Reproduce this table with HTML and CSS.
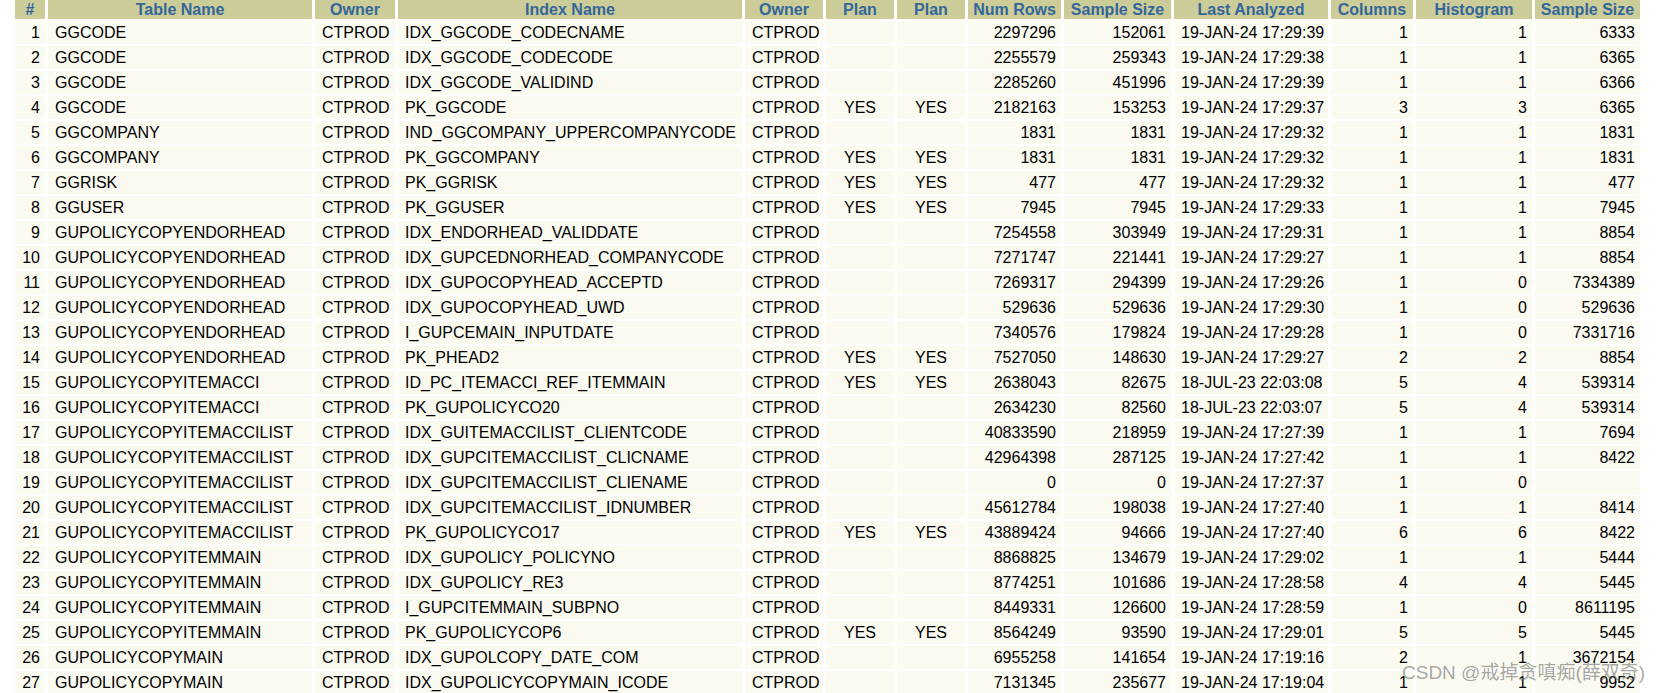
FILE: index.html
```html
<!DOCTYPE html>
<html>
<head>
<meta charset="utf-8">
<title>Index Stats</title>
<link rel="stylesheet" href="styles.css">
</head>
<body>
<table class="report">
<colgroup>
<col class="w-num"><col class="w-tab"><col class="w-own"><col class="w-idx"><col class="w-own2"><col class="w-plan"><col class="w-plan"><col class="w-rows"><col class="w-ss"><col class="w-la"><col class="w-col"><col class="w-hist"><col class="w-ss2">
</colgroup>
<thead>
<tr><th>#</th><th>Table Name</th><th>Owner</th><th>Index Name</th><th>Owner</th><th>Plan</th><th>Plan</th><th>Num Rows</th><th>Sample Size</th><th>Last Analyzed</th><th>Columns</th><th>Histogram</th><th>Sample Size</th></tr>
</thead>
<tbody>
<tr><td class="r">1</td><td>GGCODE</td><td>CTPROD</td><td>IDX_GGCODE_CODECNAME</td><td>CTPROD</td><td class="c"></td><td class="c"></td><td class="r">2297296</td><td class="r">152061</td><td>19-JAN-24 17:29:39</td><td class="r">1</td><td class="r">1</td><td class="r">6333</td></tr>
<tr><td class="r">2</td><td>GGCODE</td><td>CTPROD</td><td>IDX_GGCODE_CODECODE</td><td>CTPROD</td><td class="c"></td><td class="c"></td><td class="r">2255579</td><td class="r">259343</td><td>19-JAN-24 17:29:38</td><td class="r">1</td><td class="r">1</td><td class="r">6365</td></tr>
<tr><td class="r">3</td><td>GGCODE</td><td>CTPROD</td><td>IDX_GGCODE_VALIDIND</td><td>CTPROD</td><td class="c"></td><td class="c"></td><td class="r">2285260</td><td class="r">451996</td><td>19-JAN-24 17:29:39</td><td class="r">1</td><td class="r">1</td><td class="r">6366</td></tr>
<tr><td class="r">4</td><td>GGCODE</td><td>CTPROD</td><td>PK_GGCODE</td><td>CTPROD</td><td class="c">YES</td><td class="c">YES</td><td class="r">2182163</td><td class="r">153253</td><td>19-JAN-24 17:29:37</td><td class="r">3</td><td class="r">3</td><td class="r">6365</td></tr>
<tr><td class="r">5</td><td>GGCOMPANY</td><td>CTPROD</td><td>IND_GGCOMPANY_UPPERCOMPANYCODE</td><td>CTPROD</td><td class="c"></td><td class="c"></td><td class="r">1831</td><td class="r">1831</td><td>19-JAN-24 17:29:32</td><td class="r">1</td><td class="r">1</td><td class="r">1831</td></tr>
<tr><td class="r">6</td><td>GGCOMPANY</td><td>CTPROD</td><td>PK_GGCOMPANY</td><td>CTPROD</td><td class="c">YES</td><td class="c">YES</td><td class="r">1831</td><td class="r">1831</td><td>19-JAN-24 17:29:32</td><td class="r">1</td><td class="r">1</td><td class="r">1831</td></tr>
<tr><td class="r">7</td><td>GGRISK</td><td>CTPROD</td><td>PK_GGRISK</td><td>CTPROD</td><td class="c">YES</td><td class="c">YES</td><td class="r">477</td><td class="r">477</td><td>19-JAN-24 17:29:32</td><td class="r">1</td><td class="r">1</td><td class="r">477</td></tr>
<tr><td class="r">8</td><td>GGUSER</td><td>CTPROD</td><td>PK_GGUSER</td><td>CTPROD</td><td class="c">YES</td><td class="c">YES</td><td class="r">7945</td><td class="r">7945</td><td>19-JAN-24 17:29:33</td><td class="r">1</td><td class="r">1</td><td class="r">7945</td></tr>
<tr><td class="r">9</td><td>GUPOLICYCOPYENDORHEAD</td><td>CTPROD</td><td>IDX_ENDORHEAD_VALIDDATE</td><td>CTPROD</td><td class="c"></td><td class="c"></td><td class="r">7254558</td><td class="r">303949</td><td>19-JAN-24 17:29:31</td><td class="r">1</td><td class="r">1</td><td class="r">8854</td></tr>
<tr><td class="r">10</td><td>GUPOLICYCOPYENDORHEAD</td><td>CTPROD</td><td>IDX_GUPCEDNORHEAD_COMPANYCODE</td><td>CTPROD</td><td class="c"></td><td class="c"></td><td class="r">7271747</td><td class="r">221441</td><td>19-JAN-24 17:29:27</td><td class="r">1</td><td class="r">1</td><td class="r">8854</td></tr>
<tr><td class="r">11</td><td>GUPOLICYCOPYENDORHEAD</td><td>CTPROD</td><td>IDX_GUPOCOPYHEAD_ACCEPTD</td><td>CTPROD</td><td class="c"></td><td class="c"></td><td class="r">7269317</td><td class="r">294399</td><td>19-JAN-24 17:29:26</td><td class="r">1</td><td class="r">0</td><td class="r">7334389</td></tr>
<tr><td class="r">12</td><td>GUPOLICYCOPYENDORHEAD</td><td>CTPROD</td><td>IDX_GUPOCOPYHEAD_UWD</td><td>CTPROD</td><td class="c"></td><td class="c"></td><td class="r">529636</td><td class="r">529636</td><td>19-JAN-24 17:29:30</td><td class="r">1</td><td class="r">0</td><td class="r">529636</td></tr>
<tr><td class="r">13</td><td>GUPOLICYCOPYENDORHEAD</td><td>CTPROD</td><td>I_GUPCEMAIN_INPUTDATE</td><td>CTPROD</td><td class="c"></td><td class="c"></td><td class="r">7340576</td><td class="r">179824</td><td>19-JAN-24 17:29:28</td><td class="r">1</td><td class="r">0</td><td class="r">7331716</td></tr>
<tr><td class="r">14</td><td>GUPOLICYCOPYENDORHEAD</td><td>CTPROD</td><td>PK_PHEAD2</td><td>CTPROD</td><td class="c">YES</td><td class="c">YES</td><td class="r">7527050</td><td class="r">148630</td><td>19-JAN-24 17:29:27</td><td class="r">2</td><td class="r">2</td><td class="r">8854</td></tr>
<tr><td class="r">15</td><td>GUPOLICYCOPYITEMACCI</td><td>CTPROD</td><td>ID_PC_ITEMACCI_REF_ITEMMAIN</td><td>CTPROD</td><td class="c">YES</td><td class="c">YES</td><td class="r">2638043</td><td class="r">82675</td><td>18-JUL-23 22:03:08</td><td class="r">5</td><td class="r">4</td><td class="r">539314</td></tr>
<tr><td class="r">16</td><td>GUPOLICYCOPYITEMACCI</td><td>CTPROD</td><td>PK_GUPOLICYCO20</td><td>CTPROD</td><td class="c"></td><td class="c"></td><td class="r">2634230</td><td class="r">82560</td><td>18-JUL-23 22:03:07</td><td class="r">5</td><td class="r">4</td><td class="r">539314</td></tr>
<tr><td class="r">17</td><td>GUPOLICYCOPYITEMACCILIST</td><td>CTPROD</td><td>IDX_GUITEMACCILIST_CLIENTCODE</td><td>CTPROD</td><td class="c"></td><td class="c"></td><td class="r">40833590</td><td class="r">218959</td><td>19-JAN-24 17:27:39</td><td class="r">1</td><td class="r">1</td><td class="r">7694</td></tr>
<tr><td class="r">18</td><td>GUPOLICYCOPYITEMACCILIST</td><td>CTPROD</td><td>IDX_GUPCITEMACCILIST_CLICNAME</td><td>CTPROD</td><td class="c"></td><td class="c"></td><td class="r">42964398</td><td class="r">287125</td><td>19-JAN-24 17:27:42</td><td class="r">1</td><td class="r">1</td><td class="r">8422</td></tr>
<tr><td class="r">19</td><td>GUPOLICYCOPYITEMACCILIST</td><td>CTPROD</td><td>IDX_GUPCITEMACCILIST_CLIENAME</td><td>CTPROD</td><td class="c"></td><td class="c"></td><td class="r">0</td><td class="r">0</td><td>19-JAN-24 17:27:37</td><td class="r">1</td><td class="r">0</td><td class="r"></td></tr>
<tr><td class="r">20</td><td>GUPOLICYCOPYITEMACCILIST</td><td>CTPROD</td><td>IDX_GUPCITEMACCILIST_IDNUMBER</td><td>CTPROD</td><td class="c"></td><td class="c"></td><td class="r">45612784</td><td class="r">198038</td><td>19-JAN-24 17:27:40</td><td class="r">1</td><td class="r">1</td><td class="r">8414</td></tr>
<tr><td class="r">21</td><td>GUPOLICYCOPYITEMACCILIST</td><td>CTPROD</td><td>PK_GUPOLICYCO17</td><td>CTPROD</td><td class="c">YES</td><td class="c">YES</td><td class="r">43889424</td><td class="r">94666</td><td>19-JAN-24 17:27:40</td><td class="r">6</td><td class="r">6</td><td class="r">8422</td></tr>
<tr><td class="r">22</td><td>GUPOLICYCOPYITEMMAIN</td><td>CTPROD</td><td>IDX_GUPOLICY_POLICYNO</td><td>CTPROD</td><td class="c"></td><td class="c"></td><td class="r">8868825</td><td class="r">134679</td><td>19-JAN-24 17:29:02</td><td class="r">1</td><td class="r">1</td><td class="r">5444</td></tr>
<tr><td class="r">23</td><td>GUPOLICYCOPYITEMMAIN</td><td>CTPROD</td><td>IDX_GUPOLICY_RE3</td><td>CTPROD</td><td class="c"></td><td class="c"></td><td class="r">8774251</td><td class="r">101686</td><td>19-JAN-24 17:28:58</td><td class="r">4</td><td class="r">4</td><td class="r">5445</td></tr>
<tr><td class="r">24</td><td>GUPOLICYCOPYITEMMAIN</td><td>CTPROD</td><td>I_GUPCITEMMAIN_SUBPNO</td><td>CTPROD</td><td class="c"></td><td class="c"></td><td class="r">8449331</td><td class="r">126600</td><td>19-JAN-24 17:28:59</td><td class="r">1</td><td class="r">0</td><td class="r">8611195</td></tr>
<tr><td class="r">25</td><td>GUPOLICYCOPYITEMMAIN</td><td>CTPROD</td><td>PK_GUPOLICYCOP6</td><td>CTPROD</td><td class="c">YES</td><td class="c">YES</td><td class="r">8564249</td><td class="r">93590</td><td>19-JAN-24 17:29:01</td><td class="r">5</td><td class="r">5</td><td class="r">5445</td></tr>
<tr><td class="r">26</td><td>GUPOLICYCOPYMAIN</td><td>CTPROD</td><td>IDX_GUPOLCOPY_DATE_COM</td><td>CTPROD</td><td class="c"></td><td class="c"></td><td class="r">6955258</td><td class="r">141654</td><td>19-JAN-24 17:19:16</td><td class="r">2</td><td class="r">1</td><td class="r">3672154</td></tr>
<tr><td class="r">27</td><td>GUPOLICYCOPYMAIN</td><td>CTPROD</td><td>IDX_GUPOLICYCOPYMAIN_ICODE</td><td>CTPROD</td><td class="c"></td><td class="c"></td><td class="r">7131345</td><td class="r">235677</td><td>19-JAN-24 17:19:04</td><td class="r">1</td><td class="r">1</td><td class="r">9952</td></tr>
</tbody>
</table>
<div class="watermark">CSDN @戒掉贪嗔痴(薛双奇)</div>
</body>
</html>
```

FILE: styles.css
```css
html, body {
  margin: 0;
  padding: 0;
  background: #ffffff;
}

body {
  position: relative;
  font-family: "Liberation Sans", Arial, Helvetica, sans-serif;
  font-size: 16px;
  color: #000000;
}

.report {
  table-layout: fixed;
  width: 1631px;
  margin: -2px 0 0 12px;
  border-collapse: separate;
  border-spacing: 3px 2px;
  background: #ffffff;
}

.w-num { width: 30px; }
.w-tab { width: 264px; }
.w-own { width: 80px; }
.w-idx { width: 344px; }
.w-own2 { width: 78px; }
.w-plan { width: 68px; }
.w-rows { width: 93px; }
.w-ss { width: 107px; }
.w-la { width: 154px; }
.w-col { width: 82px; }
.w-hist { width: 116px; }
.w-ss2 { width: 105px; }

.report th {
  height: 19px;
  padding: 0;
  font-weight: bold;
  font-size: 16px;
  line-height: 19px;
  color: #336699;
  background: #cccc99;
  text-align: center;
  white-space: nowrap;
  overflow: hidden;
}

.report tbody tr {
  height: 23px;
}

.report td {
  padding: 0 5px 0 7px;
  background: #fafaf0;
  white-space: nowrap;
  overflow: hidden;
  vertical-align: middle;
  text-align: left;
}

.report td.r {
  text-align: right;
}

.report td.c {
  text-align: center;
  padding: 0 5px;
}

.watermark {
  position: absolute;
  left: 1402px;
  top: 663px;
  font-family: "Liberation Sans", "Noto Sans CJK SC", sans-serif;
  font-size: 19px;
  line-height: 19px;
  color: rgba(110, 110, 110, 0.6);
  white-space: nowrap;
  pointer-events: none;
}
```
